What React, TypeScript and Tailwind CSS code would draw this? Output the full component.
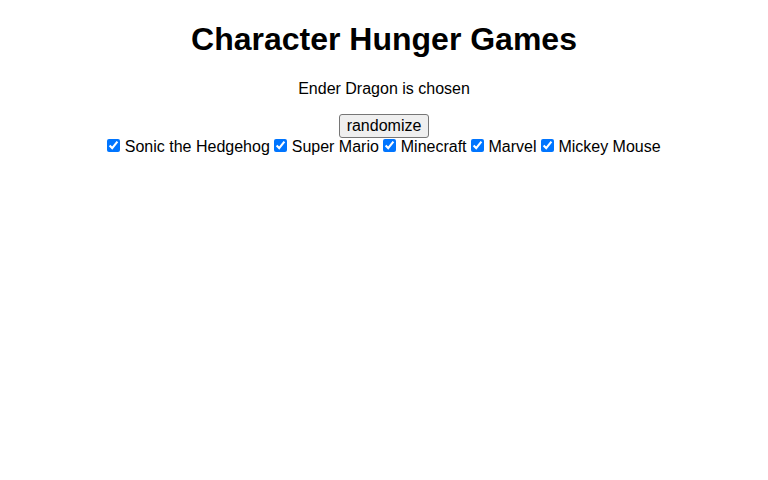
import { useState } from "react";

const franchises = ["Sonic the Hedgehog", "Super Mario", "Minecraft", "Marvel", "Mickey Mouse"];

export default function App() {
  const [checked, setChecked] = useState<boolean[]>(franchises.map(() => true));

  return (
    <div className="min-h-[480px] bg-white text-black text-center text-[16px] font-['Liberation_Sans',Arial,sans-serif]">
      <h1 className="text-[32px] leading-[36.8px] font-bold pt-[21.44px] mb-[21.44px]">Character Hunger Games</h1>
      <p className="leading-[18.4px] mb-[16px]">Ender Dragon is chosen</p>
      <div className="leading-[18.4px]">
        <button className="h-[24px] px-[7px] border border-[#767676] bg-[#efefef] rounded-[3px] text-[16px] leading-[18px] align-top">
          randomize
        </button>
        <br />
        {franchises.map((name, i) => (
          <span key={name}>
            <input
              type="checkbox"
              className="w-[13px] h-[13px]"
              checked={checked[i]}
              onChange={() => setChecked(checked.map((c, j) => (j === i ? !c : c)))}
            />{" "}
            {name}{" "}
          </span>
        ))}
      </div>
    </div>
  );
}
